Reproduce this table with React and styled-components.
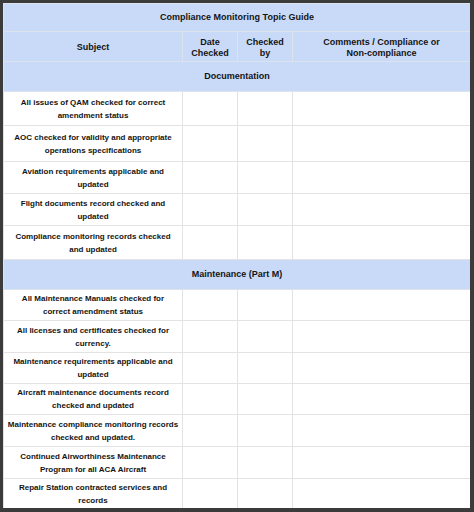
import React from "react";
import styled, { createGlobalStyle } from "styled-components";

const GlobalStyle = createGlobalStyle`
  html, body {
    margin: 0;
    padding: 0;
    background: #ffffff;
  }
  body {
    font-family: "Liberation Sans", Arial, sans-serif;
  }
`;

const documentation = [
  { h: 34, lines: ["All issues of QAM checked for correct", "amendment status"] },
  { h: 36, lines: ["AOC checked for validity and appropriate", "operations specifications"] },
  { h: 32, lines: ["Aviation requirements applicable and", "updated"] },
  { h: 32, lines: ["Flight documents record checked and", "updated"] },
  { h: 34, lines: ["Compliance monitoring records checked", "and updated"] },
];

const maintenance = [
  { h: 31, lines: ["All Maintenance Manuals checked for", "correct amendment status"] },
  { h: 32, lines: ["All licenses and certificates checked for", "currency."] },
  { h: 31, lines: ["Maintenance requirements applicable and", "updated"] },
  { h: 31, lines: ["Aircraft maintenance documents record", "checked and updated"] },
  { h: 32, lines: ["Maintenance compliance monitoring records", "checked and updated."] },
  { h: 32, lines: ["Continued Airworthiness Maintenance", "Program for all ACA Aircraft"] },
  { h: 30, lines: ["Repair Station contracted services and", "records"] },
];

export default function App() {
  const renderRows = (rows) =>
    rows.map((row, i) => (
      <Row key={i} $h={row.h}>
        <Subject>
          {row.lines.map((line, j) => (
            <Line key={j}>{line}</Line>
          ))}
        </Subject>
        <Cell />
        <Cell />
        <Cell />
      </Row>
    ));

  return (
    <>
      <GlobalStyle />
      <Frame>
        <Table>
          <colgroup>
            <col style={{ width: 179 }} />
            <col style={{ width: 55 }} />
            <col style={{ width: 55 }} />
            <col style={{ width: 178 }} />
          </colgroup>
          <tbody>
            <Row $h={28}>
              <HeadCell colSpan={4}>Compliance Monitoring Topic Guide</HeadCell>
            </Row>
            <Row $h={30}>
              <HeadCell $offset={3}>Subject</HeadCell>
              <HeadCell $offset={3}>
                Date
                <br />
                Checked
              </HeadCell>
              <HeadCell $offset={3}>
                Checked
                <br />
                by
              </HeadCell>
              <HeadCell $offset={3}>
                Comments / Compliance or
                <br />
                Non-compliance
              </HeadCell>
            </Row>
            <Row $h={30}>
              <HeadCell colSpan={4}>Documentation</HeadCell>
            </Row>
            {renderRows(documentation)}
            <Row $h={30}>
              <HeadCell colSpan={4}>Maintenance (Part M)</HeadCell>
            </Row>
            {renderRows(maintenance)}
          </tbody>
        </Table>
      </Frame>
    </>
  );
}

const Frame = styled.div`
  width: 474px;
  height: 512px;
  box-sizing: border-box;
  border-style: solid;
  border-color: #3b3b3b;
  border-width: 3px 4px 4px 3px;
  background: #ffffff;
  overflow: hidden;
`;

const Table = styled.table`
  width: 467px;
  table-layout: fixed;
  border-collapse: collapse;
  color: #141414;
`;

const Row = styled.tr`
  height: ${(p) => p.$h}px;
`;

const HeadCell = styled.td`
  background: #c9daf8;
  border: 1px solid #dde3ec;
  font-size: 9px;
  font-weight: bold;
  line-height: 11.5px;
  text-align: center;
  vertical-align: middle;
  padding: ${(p) => p.$offset || 0}px 2px 0;
  white-space: nowrap;
`;

const Cell = styled.td`
  border: 1px solid #e3e3e3;
  padding: 0;
`;

const Subject = styled(Cell)`
  font-size: 8px;
  font-weight: bold;
  line-height: 13px;
  text-align: center;
  vertical-align: middle;
  padding: 0 1px;
`;

const Line = styled.div`
  white-space: nowrap;
`;
